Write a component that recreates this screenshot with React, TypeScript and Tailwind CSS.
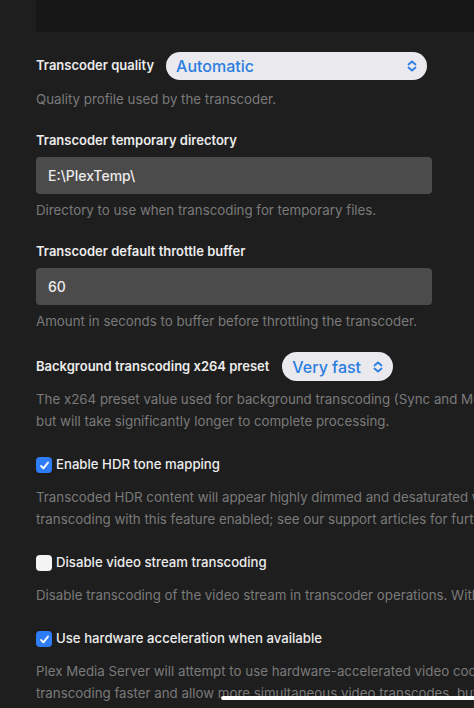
import React from "react";

const FONT = "font-['Inter','Noto_Sans',sans-serif]";

function Chevrons() {
  return (
    <svg width="12" height="14" viewBox="0 0 12 14" fill="none" className="shrink-0">
      <path d="M2.5 5.5L6 2.5l3.5 3" stroke="#2b7de0" strokeWidth="1.8" strokeLinecap="round" strokeLinejoin="round" />
      <path d="M2.5 8.5L6 11.5l3.5-3" stroke="#2b7de0" strokeWidth="1.8" strokeLinecap="round" strokeLinejoin="round" />
    </svg>
  );
}

function Select({ value, className }: { value: string; className: string }) {
  return (
    <div className={`flex items-center justify-between rounded-full bg-[#e9e9ee] pl-[10px] pr-[9px] ${className}`}>
      <span className="text-[16px] font-medium text-[#2b7de0] leading-none">{value}</span>
      <Chevrons />
    </div>
  );
}

function Checkbox({ checked }: { checked: boolean }) {
  return checked ? (
    <div className="w-4 h-4 rounded-[4px] bg-[#2f7df6] flex items-center justify-center shrink-0">
      <svg width="11" height="11" viewBox="0 0 12 12" fill="none">
        <path d="M2.2 6.4l2.6 2.7L9.8 2.8" stroke="white" strokeWidth="2" strokeLinecap="round" strokeLinejoin="round" />
      </svg>
    </div>
  ) : (
    <div className="w-4 h-4 rounded-[4px] bg-[#f4f4f4] shrink-0" />
  );
}

function Desc({ lines, className = "" }: { lines: string[]; className?: string }) {
  return (
    <div className={`text-[13.3px] leading-[22px] text-[#7a7a7a] whitespace-nowrap ${className}`}>
      {lines.map((l) => (
        <div key={l}>{l}</div>
      ))}
    </div>
  );
}

function CheckRow({ checked, label, className }: { checked: boolean; label: string; className: string }) {
  return (
    <div className={`flex items-center gap-[4px] h-5 ${className}`}>
      <Checkbox checked={checked} />
      <span className="text-[13.2px] font-medium text-[#ececec] whitespace-nowrap">{label}</span>
    </div>
  );
}

export default function App() {
  return (
    <div className={`relative w-[474px] h-[708px] overflow-hidden bg-[#1e1e1e] ${FONT}`}>
      <div className="pl-9">
        {/* panel above, cut off */}
        <div className="h-8 bg-[#171717]" />

        {/* Transcoder quality */}
        <div className="mt-5 flex items-center gap-3 h-7">
          <span className="text-[13px] font-semibold text-[#ececec] whitespace-nowrap">Transcoder quality</span>
          <Select value="Automatic" className="w-[261px] h-7" />
        </div>
        <Desc className="mt-2" lines={["Quality profile used by the transcoder."]} />

        {/* temp dir */}
        <div className="mt-5 text-[13px] leading-5 font-semibold text-[#ececec]">Transcoder temporary directory</div>
        <div className="mt-[7px] w-[396px] h-[37px] rounded-[4px] bg-[#4b4b4b] flex items-center px-3 text-[14px] font-medium text-[#ececec]">
          E:\PlexTemp\
        </div>
        <Desc className="mt-[5px]" lines={["Directory to use when transcoding for temporary files."]} />

        {/* throttle buffer */}
        <div className="mt-5 text-[13px] leading-5 font-semibold text-[#ececec]">Transcoder default throttle buffer</div>
        <div className="mt-[7px] w-[396px] h-[37px] rounded-[4px] bg-[#4b4b4b] flex items-center px-3 text-[14px] font-medium text-[#ececec]">
          60
        </div>
        <Desc className="mt-[5px]" lines={["Amount in seconds to buffer before throttling the transcoder."]} />

        {/* x264 preset */}
        <div className="mt-5 flex items-center gap-[13px] h-[29px]">
          <span className="text-[13px] font-semibold text-[#ececec] whitespace-nowrap">Background transcoding x264 preset</span>
          <Select value="Very fast" className="w-[111px] h-[29px]" />
        </div>
        <Desc
          className="mt-[7px]"
          lines={[
            "The x264 preset value used for background transcoding (Sync and Media Optimizer). Slower values will result in better video quality and smaller file sizes,",
            "but will take significantly longer to complete processing.",
          ]}
        />

        <CheckRow className="mt-[23px]" checked label="Enable HDR tone mapping" />
        <Desc
          className="mt-[11px]"
          lines={[
            "Transcoded HDR content will appear highly dimmed and desaturated without tone mapping. Hardware acceleration is not available when",
            "transcoding with this feature enabled; see our support articles for further details.",
          ]}
        />

        <CheckRow className="mt-[23px]" checked={false} label="Disable video stream transcoding" />
        <Desc
          className="mt-[11px]"
          lines={["Disable transcoding of the video stream in transcoder operations. Without video transcoding, incompatible media will fail to play."]}
        />

        <CheckRow className="mt-[23px]" checked label="Use hardware acceleration when available" />
        <Desc
          className="mt-[11px]"
          lines={[
            "Plex Media Server will attempt to use hardware-accelerated video codecs when encoding and decoding video. Hardware acceleration can make",
            "transcoding faster and allow more simultaneous video transcodes, but it can also reduce video quality and compatibility.",
          ]}
        />
      </div>

      {/* home indicator */}
      <div className="absolute left-[221px] top-[696px] w-[300px] h-[4px] rounded-full bg-white" />
    </div>
  );
}
